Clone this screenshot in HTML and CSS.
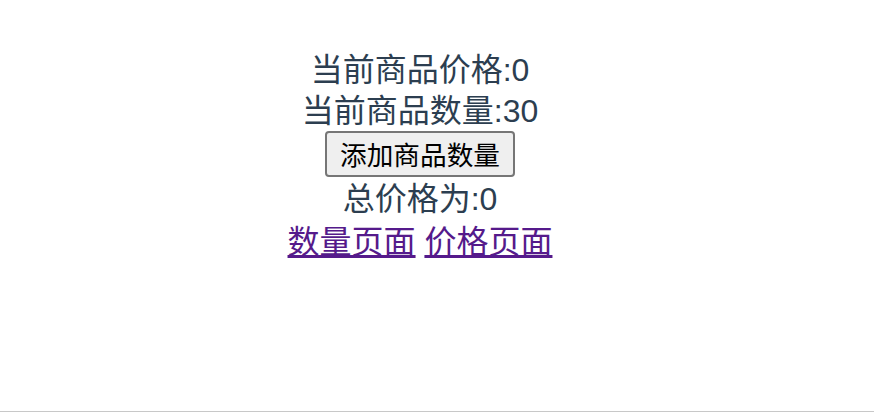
FILE: index.html
```html
<!DOCTYPE html>
<html lang="zh-CN">
<head>
<meta charset="utf-8">
<link rel="stylesheet" href="styles.css">
</head>
<body>
<div class="app">
  <div class="line">当前商品价格:0</div>
  <div class="line short">当前商品数量:30</div>
  <div class="btn-row"><button class="btn">添加商品数量</button></div>
  <div class="line">总价格为:0</div>
  <div class="line links"><a href="#" class="link">数量页面</a> <a href="#" class="link">价格页面</a></div>
</div>
<div class="bottom-line"></div>
</body>
</html>
```
FILE: styles.css
```css
html, body {
  margin: 0;
  padding: 0;
  height: 412px;
  overflow: hidden;
  background: #fff;
}
body {
  display: flex;
  flex-direction: column;
}
.app {
  flex: 1;
  font-family: "Liberation Sans", "Noto Sans CJK SC", sans-serif;
  color: #2c3e50;
  text-align: center;
  font-size: 32px;
  line-height: 41px;
  padding-top: 50px;
  padding-right: 34px;
}
.short {
  height: 40px;
}
.btn-row {
  height: 48px;
}
.links {
  line-height: 45px;
}
.btn {
  font-family: "Liberation Sans", "Noto Sans CJK SC", sans-serif;
  font-size: 26.67px;
  line-height: 30px;
  color: #000;
  background: #efefef;
  border: 2px solid #767676;
  border-radius: 4px;
  padding: 8px 13px 4px;
  height: 46px;
  margin: 0;
  vertical-align: top;
}
.link {
  color: #551a8b;
  text-decoration: underline;
}
.bottom-line {
  height: 1px;
  background: #c8c8c8;
}
```
